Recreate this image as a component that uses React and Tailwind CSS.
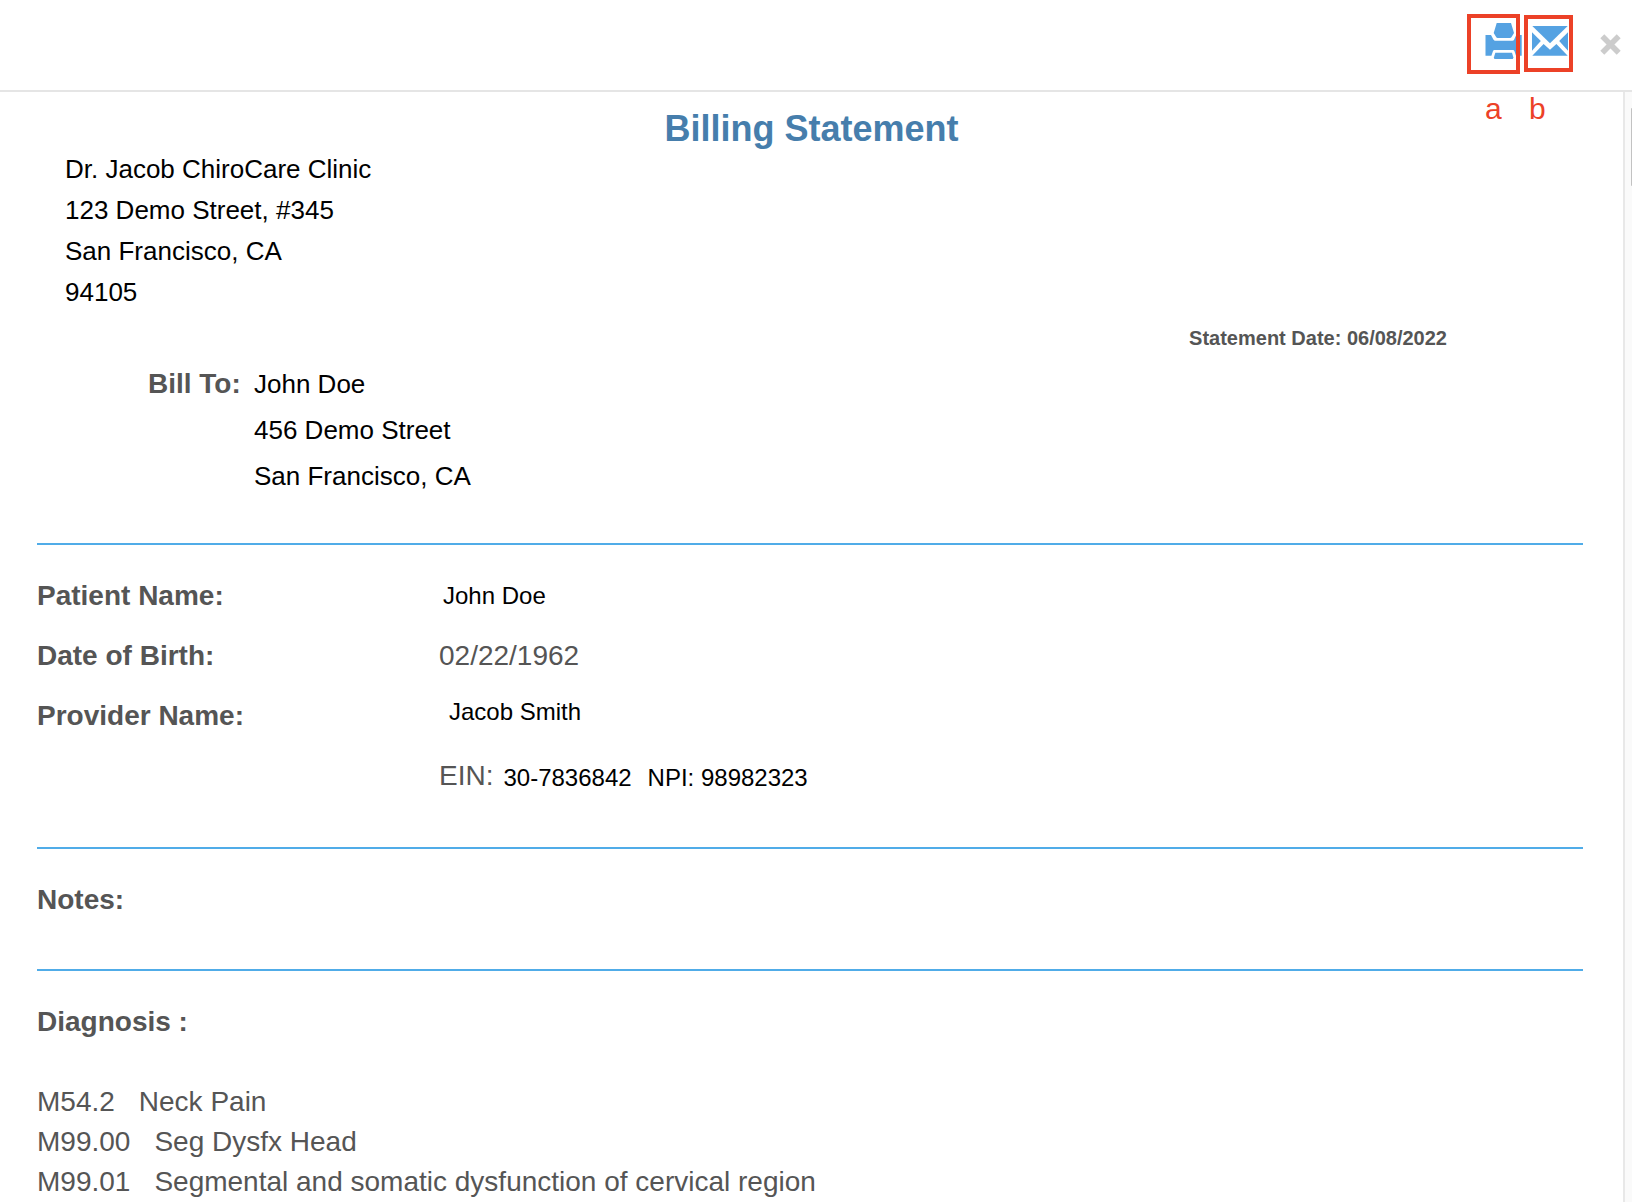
import React from "react"

const diagnoses = [
  { code: "M54.2", name: "Neck Pain" },
  { code: "M99.00", name: "Seg Dysfx Head" },
  { code: "M99.01", name: "Segmental and somatic dysfunction of cervical region" },
]

const PrintIcon = () => (
  <svg className="h-9 w-[37px] fill-[#55a2e2]" viewBox="0 0 37 36">
    <path d="M11.7 0H26L29 10L26.4 14.3Q25.9 15 25 15H12.6Q11.7 15 11.3 14.3L8.7 10Z" />
    <path d="M0.5 12H6L8.4 16.6Q9 17.8 10.4 17.8H27.3Q28.6 17.8 29.2 16.6L31.2 12H36.7V32.7H31L29.4 28Q29 27 28 27H9.4Q8.4 27 8 28L6.4 32.7H0.5Z" />
    <path d="M10.3 29.8H27L28.4 34.5L27.8 36H9.4L8.9 34.5Z" />
  </svg>
)

const MailIcon = () => (
  <svg className="h-9 w-9 fill-[#55a2e2]" viewBox="0 0 36 36">
    <path d="M0.3 3H35.7L18 20.2Z" />
    <path d="M0 9.2L8.8 18L0 27.8Z" />
    <path d="M36 9.2L27.2 18L36 27.8Z" />
    <path d="M0.3 32.8L11.6 21L18 26.8L24.4 21L35.7 32.8Z" />
  </svg>
)

const CloseIcon = () => (
  <svg className="h-[21px] w-[21px] stroke-[#cccccc]" viewBox="0 0 21 21">
    <path d="M2.3 2.3L18.7 18.7M18.7 2.3L2.3 18.7" strokeWidth="5.6" />
  </svg>
)

const Header = () => (
  <header className="flex h-[92px] items-start justify-end border-b-2 border-[#e5e5e5] pr-[11px] pt-[23px]">
    <button type="button" aria-label="Print" className="relative">
      <PrintIcon />
      <span className="absolute -left-[18px] -top-[9px] h-[60px] w-[53px] border-4 border-[#ec4127]" />
      <span className="absolute left-0 top-[68px] text-[30px] leading-9 text-[#ec4127]">
        a
      </span>
    </button>
    <button type="button" aria-label="Email" className="relative ml-[10px]">
      <MailIcon />
      <span className="absolute -left-2 -top-2 h-[57px] w-[49px] border-4 border-[#ec4127]" />
      <span className="absolute -left-[3px] top-[68px] text-[30px] leading-9 text-[#ec4127]">
        b
      </span>
    </button>
    <button type="button" aria-label="Close" className="ml-8 mt-[11px]">
      <CloseIcon />
    </button>
  </header>
)

const Divider = ({ className }) => (
  <hr className={`border-t-2 border-[#50ace8] ${className}`} />
)

const Field = ({ label, children }) => (
  <div className="flex h-10">
    <dt className="w-[402px] font-bold">{label}</dt>
    <dd className="flex">{children}</dd>
  </div>
)

const App = () => {
  return (
    <div className="flex min-h-screen flex-col bg-white font-['Liberation_Sans',Arial,sans-serif] text-[28px] leading-10 text-[#555555]">
      <Header />
      <div className="flex grow">
        <main className="grow pt-[17px]">
          <h1 className="text-center text-[36px] font-bold text-[#467eac]">
            Billing Statement
          </h1>

          <address className="pl-[65px] text-[26px] leading-[41px] text-black not-italic">
            <p>Dr. Jacob ChiroCare Clinic</p>
            <p>123 Demo Street, #345</p>
            <p>San Francisco, CA</p>
            <p>94105</p>
          </address>

          <p className="mt-[11px] pr-44 text-right text-[20px] font-bold leading-7">
            Statement Date: 06/08/2022
          </p>

          <div className="mt-[9px] flex pl-[148px] leading-[46px]">
            <h2 className="w-[106px] font-bold">Bill To:</h2>
            <address className="text-[26px] text-black not-italic">
              <p>John Doe</p>
              <p>456 Demo Street</p>
              <p>San Francisco, CA</p>
            </address>
          </div>

          <div className="pl-[37px] pr-10">
            <Divider className="mt-11" />
            <dl className="mt-[31px] flex flex-col gap-5">
              <Field label="Patient Name:">
                <span className="pl-1 text-[24px] text-black">John Doe</span>
              </Field>
              <Field label="Date of Birth:">02/22/1962</Field>
              <Field label="Provider Name:">
                <span className="pl-[10px] text-[24px] leading-8 text-black">
                  Jacob Smith
                </span>
              </Field>
              <Field>
                <span>EIN:</span>
                <span className="pl-[10px] text-[24px] leading-[44px] text-black">
                  30-7836842
                </span>
                <span className="pl-4 text-[24px] leading-[44px] text-black">
                  NPI: 98982323
                </span>
              </Field>
            </dl>

            <Divider className="mt-[51px]" />
            <h2 className="mt-[31px] font-bold">Notes:</h2>

            <Divider className="mt-[49px]" />
            <h2 className="mt-[31px] font-bold">Diagnosis :</h2>
            <ul className="mt-10">
              {diagnoses.map((item) => (
                <li key={item.code} className="flex gap-6">
                  <span>{item.code}</span>
                  <span>{item.name}</span>
                </li>
              ))}
            </ul>
          </div>
        </main>

        {/* scrollbar */}
        <div className="flex w-[9px] justify-end border-l-2 border-[#e8e8e8] bg-[#fafafa] pt-4">
          <div className="h-[78px] w-px rounded-l-sm bg-[#c2c2c2]" />
        </div>
      </div>
    </div>
  )
}

export default App
